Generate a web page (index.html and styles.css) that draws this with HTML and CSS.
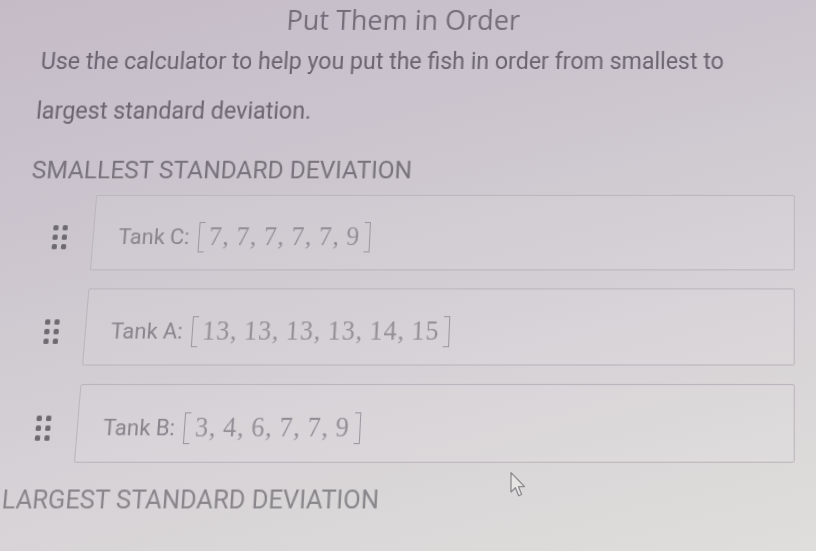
FILE: index.html
```html
<!DOCTYPE html>
<html lang="en">
<head>
<meta charset="utf-8">
<title>Put Them in Order</title>
<link rel="stylesheet" href="styles.css">
</head>
<body>
<div class="screen">
  <h1 class="title">Put Them in Order</h1>
  <p class="prompt">Use the calculator to help you put the fish in order from smallest to largest standard deviation.</p>
  <div class="label">SMALLEST STANDARD DEVIATION</div>
  <ul class="list">
    <li class="row">
      <span class="handle"><i></i><i></i><i></i><i></i><i></i><i></i></span>
      <div class="card">
        <span class="name">Tank C:</span>
        <span class="math"><span class="br br-l"></span><span class="nums">7,&thinsp;7,&thinsp;7,&thinsp;7,&thinsp;7,&thinsp;9</span><span class="br br-r"></span></span>
      </div>
    </li>
    <li class="row">
      <span class="handle"><i></i><i></i><i></i><i></i><i></i><i></i></span>
      <div class="card">
        <span class="name">Tank A:</span>
        <span class="math"><span class="br br-l"></span><span class="nums">13,&thinsp;13,&thinsp;13,&thinsp;13,&thinsp;14,&thinsp;15</span><span class="br br-r"></span></span>
      </div>
    </li>
    <li class="row">
      <span class="handle"><i></i><i></i><i></i><i></i><i></i><i></i></span>
      <div class="card">
        <span class="name">Tank B:</span>
        <span class="math"><span class="br br-l"></span><span class="nums">3,&thinsp;4,&thinsp;6,&thinsp;7,&thinsp;7,&thinsp;9</span><span class="br br-r"></span></span>
      </div>
    </li>
  </ul>
  <div class="label label-bottom">LARGEST STANDARD DEVIATION</div>
</div>
<svg class="cursor" width="18" height="28" viewBox="0 0 16 26" aria-hidden="true">
  <path d="M1.5 1.5 L1.5 19.5 L5.6 15.6 L8.6 23 L11.4 21.8 L8.5 14.6 L14 14.4 Z" fill="#e6e5e3" stroke="#8e8c90" stroke-width="1.2" stroke-linejoin="round"/>
</svg>
</body>
</html>
```
FILE: styles.css
```css
html {
  height: 100%;
  background: linear-gradient(165deg, #c4bbc6 0%, #cdc6cf 35%, #d6d2d6 65%, #dfdedb 100%);
}
body {
  margin: 0;
  min-height: 100%;
  overflow: hidden;
  position: relative;
  font-family: Roboto, "Liberation Sans", sans-serif;
  color: #6c6671;
}
.screen {
  width: 816px;
  transform-origin: 800px 0;
  transform: perspective(1000px) rotateX(6.9deg);
}
.title {
  margin: 5px 0 0;
  padding-right: 8px;
  height: 30px;
  line-height: 30px;
  font-family: "Open Sans", Roboto, sans-serif;
  font-size: 27px;
  font-weight: 400;
  text-align: center;
  color: #746e79;
}
.prompt {
  margin: 2px 0 0;
  padding: 0 40px 0 46px;
  font-size: 23px;
  line-height: 49px;
  color: #6b6570;
}
.label {
  margin-top: 19px;
  padding-left: 47px;
  height: 28px;
  line-height: 28px;
  font-size: 24px;
  color: #78737c;
}
.label-bottom {
  margin-top: 19px;
  color: #88868a;
}
.list {
  list-style: none;
  margin: 10px 0 0;
  padding: 0 21px 0 73px;
  display: flex;
  flex-direction: column;
  gap: 17px;
}
.row {
  display: flex;
  align-items: center;
  gap: 25px;
}
.handle {
  display: grid;
  grid-template-columns: 5px 5px;
  grid-auto-rows: 5px;
  gap: 4px;
  width: 14px;
  margin-top: 8px;
}
.handle i {
  display: block;
  background: #6e6a72;
  border-radius: 1.5px;
}
.card {
  flex: 1;
  height: 72px;
  box-sizing: border-box;
  border: 1.5px solid #bab5bc;
  border-radius: 2px;
  background: rgba(255, 255, 255, 0.05);
  display: flex;
  align-items: center;
  gap: 9px;
  padding: 8px 0 0 24px;
}
.name {
  font-size: 21px;
  color: #88838c;
}
.math {
  display: flex;
  align-items: center;
  gap: 4px;
}
.nums {
  font-family: "Liberation Serif", "DejaVu Serif", serif;
  font-size: 25px;
  letter-spacing: 1px;
  color: #948f97;
  line-height: 30px;
}
.br {
  display: block;
  width: 6px;
  height: 29px;
  box-sizing: border-box;
  border: 1.5px solid #9c97a0;
}
.br-l { border-right: none; }
.br-r { border-left: none; }
.cursor {
  position: absolute;
  left: 509px;
  top: 471px;
}
```
